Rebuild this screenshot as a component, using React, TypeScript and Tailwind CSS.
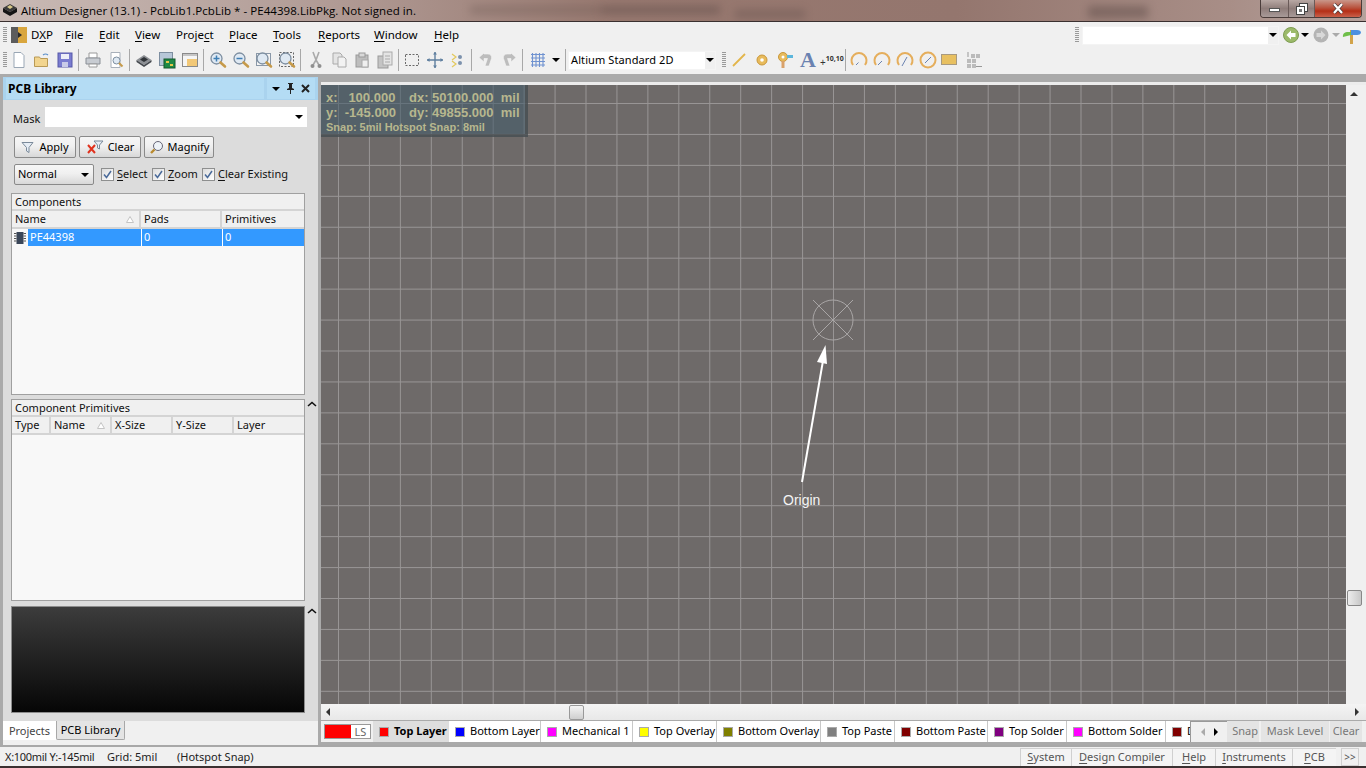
import type { ReactNode } from "react";

const UI = "font-['Noto_Sans',sans-serif]";

function Ic({ children, w = 23 }: { children: ReactNode; w?: number }) {
  return (
    <span className="flex h-full shrink-0 items-center justify-center" style={{ width: w }}>
      <svg width="18" height="18" viewBox="0 0 18 18" fill="none">
        {children}
      </svg>
    </span>
  );
}

function Sep() {
  return <span className="mx-[2px] h-[22px] w-px shrink-0 bg-[#a8a8a8]" />;
}

function Grip() {
  return <span className="block h-[16px] w-[4px] shrink-0 bg-[repeating-linear-gradient(to_bottom,#9a9a9a_0,#9a9a9a_1px,transparent_1px,transparent_2px)]" />;
}

function Caret({ className = "" }: { className?: string }) {
  return <span className={`inline-block h-0 w-0 border-x-[4px] border-t-[4px] border-x-transparent border-t-black ${className}`} />;
}

function Mag({ inner, lens = "#dfe9f3" }: { inner?: ReactNode; lens?: string }) {
  return (
    <>
      <circle cx="7.5" cy="7.5" r="5.5" fill={lens} stroke="#7d8ea0" strokeWidth="1.3" />
      <path d="M11.5 11.5l4.5 4" stroke="#c69a4a" strokeWidth="2.6" strokeLinecap="round" />
      {inner}
    </>
  );
}

function MenuItem({ w, pre = "", u, post = "" }: { w: number; pre?: string; u: string; post?: string }) {
  return (
    <span className="shrink-0 whitespace-nowrap" style={{ width: w }}>
      {pre}
      <span className="underline underline-offset-2">{u}</span>
      {post}
    </span>
  );
}

function TitleBar() {
  return (
    <div className="relative flex h-[21px] items-start overflow-hidden bg-[linear-gradient(90deg,#c9bab5_0%,#b09a94_25%,#97786f_45%,#94766e_70%,#a88e87_90%,#b5a29c_100%)]">
      <span className="absolute left-[470px] top-[6px] h-[8px] w-[130px] bg-[#6e5a54] opacity-40 blur-[4px]" />
      <span className="absolute left-[600px] top-[6px] h-[8px] w-[120px] bg-[#5e4c48] opacity-50 blur-[4px]" />
      <span className="absolute left-[735px] top-[10px] h-[8px] w-[70px] bg-[#5e4c48] opacity-40 blur-[4px]" />
      <span className="absolute left-[1088px] top-[6px] h-[12px] w-[60px] bg-[#5e4c48] opacity-50 blur-[4px]" />
      <span className="ml-[2px] mt-[2px] flex h-[16px] w-[16px] shrink-0 items-center justify-center">
        <svg width="16" height="16" viewBox="0 0 16 16">
          <path d="M1 6l7-4 7 4-7 4z" fill="#3a3a3a" />
          <path d="M1 6v4l7 4 7-4V6l-7 4z" fill="#151515" />
          <path d="M5 5l3-2 3 2-3 2z" fill="#d8c98a" />
        </svg>
      </span>
      <span className="ml-[3px] mt-[2px] whitespace-nowrap font-['Open_Sans',sans-serif] text-[11.5px] leading-[17px] tracking-[0.05px] text-black">
        Altium Designer (13.1) - PcbLib1.PcbLib * - PE44398.LibPkg. Not signed in.
      </span>
      <div className="ml-auto mr-[4px] flex h-[18px] overflow-hidden rounded-b-[4px] border border-t-0 border-[#4a3c3a]">
        <span className="flex w-[28px] items-center justify-center border-r border-[#6a5a58] bg-[linear-gradient(#b8a8a4,#8f7d7a_50%,#a89a98)]">
          <span className="mt-[3px] h-[4px] w-[11px] border border-[#555] bg-white" />
        </span>
        <span className="flex w-[26px] items-center justify-center border-r border-[#6a5a58] bg-[linear-gradient(#b8a8a4,#8f7d7a_50%,#a89a98)]">
          <svg width="12" height="12" viewBox="0 0 12 12">
            <rect x="3.5" y="0.5" width="8" height="8" fill="#fff" stroke="#444" />
            <rect x="0.5" y="3.5" width="8" height="8" fill="#fff" stroke="#444" />
            <rect x="3" y="6" width="3" height="3" fill="#777" />
          </svg>
        </span>
        <span className="flex w-[46px] items-center justify-center bg-[linear-gradient(#c9978a,#b9543f_45%,#b52e16_65%,#c9604a)]">
          <svg width="12" height="11" viewBox="0 0 12 11">
            <path d="M2 1l8 9M10 1l-8 9" stroke="#4a3a3a" strokeWidth="3.6" />
            <path d="M2 1l8 9M10 1l-8 9" stroke="#fff" strokeWidth="2.2" />
          </svg>
        </span>
      </div>
    </div>
  );
}

function MenuBar() {
  return (
    <div className={`flex h-[22px] items-center bg-[#f0f0f0] pt-[4px] text-[11.5px] text-black ${UI}`}>
      <span className="ml-[3px] mr-[4px]">
        <Grip />
      </span>
      <svg width="16" height="16" viewBox="0 0 16 16" className="mr-[4px] shrink-0">
        <rect x="0" y="0" width="7" height="16" fill="#5c5c5c" />
        <rect x="7" y="0" width="9" height="16" fill="#d9a63e" />
        <path d="M7 5l4 3-4 3z" fill="#2a2a2a" />
      </svg>
      <MenuItem w={34} pre="D" u="X" post="P" />
      <MenuItem w={34} u="F" post="ile" />
      <MenuItem w={36} u="E" post="dit" />
      <MenuItem w={41} u="V" post="iew" />
      <MenuItem w={53} pre="Proje" u="c" post="t" />
      <MenuItem w={44} u="P" post="lace" />
      <MenuItem w={45} u="T" post="ools" />
      <MenuItem w={56} u="R" post="eports" />
      <MenuItem w={60} u="W" post="indow" />
      <MenuItem w={40} u="H" post="elp" />
    </div>
  );
}

function ToolBar() {
  return (
    <div className="flex h-[30px] items-center bg-[#f0f0f0] pt-[2px]">
      <span className="ml-[3px]">
        <Grip />
      </span>
      <Ic>
        <path d="M4 1.5h7l3 3v12H4z" fill="#fff" stroke="#9aa7b5" />
      </Ic>
      <Ic>
        <path d="M1.5 6h5l1 1.5h7v8h-13z" fill="#f2d58f" stroke="#b99a56" />
        <path d="M10 4a4 4 0 0 1 5 0" stroke="#5b8fc9" strokeWidth="1.2" />
      </Ic>
      <Ic>
        <rect x="2" y="2" width="14" height="14" fill="#7a7cd0" stroke="#5658a8" />
        <rect x="5" y="3" width="8" height="5" fill="#eceef8" />
        <rect x="6" y="11" width="6" height="5" fill="#c9cbe8" />
      </Ic>
      <Sep />
      <Ic>
        <path d="M5 2h8v5H5z" fill="#fff" stroke="#9a9a9a" />
        <path d="M2 7h14v6H2z" fill="#c8ccd2" stroke="#8a8f96" />
        <path d="M5 13h8v3H5z" fill="#fff" stroke="#9a9a9a" />
      </Ic>
      <Ic>
        <path d="M4 1.5h9v15H4z" fill="#fff" stroke="#a8b0ba" />
        <circle cx="9.5" cy="9.5" r="3.5" fill="#dfe9f3" stroke="#7d8ea0" />
        <path d="M12 12l3.5 3.5" stroke="#c69a4a" strokeWidth="2" />
      </Ic>
      <Sep />
      <Ic>
        <path d="M1.5 9l7.5-5 7.5 5-7.5 5z" fill="#8c8f94" />
        <path d="M1.5 9v2l7.5 5 7.5-5V9l-7.5 5z" fill="#44484e" />
        <path d="M5 8.5l4-2.6 4 2.6-4 2.6z" fill="#2f3338" />
      </Ic>
      <Ic>
        <rect x="1.5" y="1.5" width="13" height="13" fill="#b7c7d8" stroke="#7d8ea0" />
        <rect x="6" y="8" width="11" height="9" fill="#1f8a46" stroke="#14592c" />
        <rect x="8" y="10" width="3" height="2" fill="#e8c64a" />
        <rect x="12" y="13" width="3" height="2" fill="#e8c64a" />
      </Ic>
      <Ic>
        <rect x="1.5" y="2.5" width="15" height="13" fill="#f5f5f5" stroke="#8a8a8a" />
        <rect x="2" y="3" width="14" height="2" fill="#c5c5c5" />
        <rect x="6" y="8" width="10" height="7" fill="#f2c877" />
      </Ic>
      <Sep />
      <Ic>
        <Mag inner={<path d="M4.5 7.5h6M7.5 4.5v6" stroke="#3f7fb5" strokeWidth="1.5" />} />
      </Ic>
      <Ic>
        <Mag inner={<path d="M4.5 7.5h6" stroke="#3f7fb5" strokeWidth="1.5" />} />
      </Ic>
      <Ic>
        <rect x="1.5" y="2.5" width="14" height="12" fill="#f4f4f4" stroke="#8a98a8" />
        <Mag />
      </Ic>
      <Ic>
        <rect x="1.5" y="1.5" width="14" height="14" stroke="#666" strokeDasharray="2 1.5" />
        <Mag />
      </Ic>
      <Sep />
      <span className="w-[1px]" />
      <Ic>
        <path d="M6 1l3 8 3-8M9 9l-3 5M9 9l3 5" stroke="#a9a9a9" strokeWidth="1.6" />
        <circle cx="5.5" cy="15" r="2" fill="#8f8f8f" />
        <circle cx="12.5" cy="15" r="2" fill="#8f8f8f" />
      </Ic>
      <Ic>
        <path d="M3 2h7l2 2v9H3z" fill="#e4e4e4" stroke="#aaa" />
        <path d="M8 6h6l2 2v8H8z" fill="#f2f2f2" stroke="#aaa" />
      </Ic>
      <Ic>
        <rect x="3" y="4" width="12" height="12" fill="#bdbdbd" stroke="#999" />
        <rect x="6" y="2" width="6" height="4" fill="#d8d8d8" stroke="#999" />
        <rect x="9" y="9" width="6" height="7" fill="#efefef" stroke="#aaa" />
      </Ic>
      <Ic>
        <rect x="2" y="5" width="10" height="12" fill="#c4c4c4" stroke="#999" />
        <rect x="7" y="1" width="9" height="13" fill="#e4e4e4" stroke="#aaa" />
        <path d="M9 5h5M9 8h5M9 11h5" stroke="#aaa" />
      </Ic>
      <span className="ml-[2px] mr-[1px] h-[22px] w-px shrink-0 bg-[#a8a8a8]" />
      <Ic>
        <rect x="2.5" y="3.5" width="13" height="11" stroke="#6a6a6a" strokeDasharray="2 1.5" />
      </Ic>
      <Ic>
        <path d="M9 1v16M1 9h16" stroke="#5f7f9f" strokeWidth="1.4" />
        <path d="M9 1l-2 2.5h4zM9 17l-2-2.5h4zM1 9l2.5-2v4zM17 9l-2.5-2v4z" fill="#5f7f9f" />
      </Ic>
      <Ic>
        <path d="M3 3l4 3-4 3" stroke="#e3c95c" strokeWidth="1.2" />
        <path d="M3 10l4 3-4 3" stroke="#e3c95c" strokeWidth="1.2" />
        <circle cx="11" cy="6" r="2" fill="#7d92ad" />
        <circle cx="11" cy="12" r="2" fill="#7d92ad" />
      </Ic>
      <Sep />
      <Ic>
        <path d="M7 3h4a3.5 3.5 0 0 1 3.5 4.5L12 15H8l2.5-7.5H7V11L2 6.5 7 2z" fill="#bdbdbd" stroke="#f5f5f5" strokeWidth="0.6" />
      </Ic>
      <Ic>
        <path d="M11 3H7a3.5 3.5 0 0 0-3.5 4.5L6 15h4L7.5 7.5H11V11l5-4.5L11 2z" fill="#bdbdbd" stroke="#f5f5f5" strokeWidth="0.6" />
      </Ic>
      <Sep />
      <span className="w-[1px]" />
      <Ic>
        <path d="M2 3.5h14M2 7h14M2 10.5h14M2 14h14M3.5 2v14M7 2v14M10.5 2v14M14 2v14" stroke="#6f92d0" strokeWidth="1.1" />
      </Ic>
      <span className="ml-[-1px] flex w-[15px] justify-center">
        <Caret />
      </span>
      <Sep />
      <div className={`flex h-[19px] w-[148px] shrink-0 items-center justify-between border border-[#f4f4f4] bg-white pl-[2px] text-[11px] tracking-[0.1px] text-black ${UI}`}>
        <span>Altium Standard 2D</span>
        <span className="flex h-full w-[10px] items-center justify-center bg-[#f0f0f0]">
          <Caret />
        </span>
      </div>
      <span className="ml-[6px] mr-[1px]">
        <Grip />
      </span>
      <Ic>
        <path d="M3 15L15 3" stroke="#e3b54a" strokeWidth="1.8" />
      </Ic>
      <Ic>
        <circle cx="9" cy="9" r="5" fill="#e8bb5c" stroke="#c9973a" />
        <circle cx="9" cy="9" r="1.8" fill="#fff" />
      </Ic>
      <Ic>
        <circle cx="7" cy="6" r="4.5" fill="#e8bb5c" stroke="#c9973a" />
        <circle cx="7" cy="6" r="1.5" fill="#fff" />
        <rect x="5.5" y="10" width="3" height="7" fill="#d9a26a" />
        <rect x="11" y="4" width="6" height="3" fill="#5cb6dc" />
      </Ic>
      <span className="flex w-[24px] shrink-0 items-center justify-center font-['Liberation_Serif',serif] text-[22px] font-bold leading-none text-[#6a82b0]">A</span>
      <span className={`flex w-[24px] shrink-0 items-center whitespace-nowrap text-[7px] font-bold leading-none text-[#333] ${UI}`}>
        <span className="mt-[4px] text-[10px] font-normal">+</span>
        <span className="-translate-y-[2px]">10,10</span>
      </span>
      <span className="ml-[1px] mr-[1px] h-[22px] w-px shrink-0 bg-[#a8a8a8]" />
      <Ic>
        <path d="M3 14a7.5 7.5 0 1 1 12 0" stroke="#e5ae5c" strokeWidth="2" />
        <path d="M6 14l2.5-2.5" stroke="#6a82b0" />
      </Ic>
      <Ic>
        <path d="M3 14a7.5 7.5 0 1 1 12 0" stroke="#e5ae5c" strokeWidth="2" />
        <path d="M5 14l4-4" stroke="#6a82b0" />
      </Ic>
      <Ic>
        <path d="M3 14a7.5 7.5 0 1 1 12 0" stroke="#e5ae5c" strokeWidth="2" />
        <path d="M6 15l5-9" stroke="#6a82b0" />
      </Ic>
      <Ic>
        <circle cx="9" cy="9" r="7.5" stroke="#e5ae5c" strokeWidth="2" />
        <path d="M6 12l6-6" stroke="#6a82b0" />
      </Ic>
      <Ic w={20}>
        <rect x="1.5" y="3.5" width="15" height="10" fill="#e8c060" stroke="#a89a80" />
      </Ic>
      <Ic w={29}>
        <path d="M3 1v5M11 15.5h6" stroke="#999" />
        <rect x="6" y="3" width="4" height="4" fill="#bbb" />
        <rect x="11" y="3" width="4" height="4" fill="#bbb" />
        <rect x="2" y="8" width="4" height="4" fill="#bbb" />
        <rect x="7" y="8" width="4" height="4" fill="#bbb" />
        <rect x="2" y="13" width="4" height="4" fill="#bbb" />
        <rect x="7" y="13" width="4" height="4" fill="#bbb" />
      </Ic>
    </div>
  );
}

function Nav() {
  return (
    <div className="ml-auto flex items-center pr-[5px]">
      <Grip />
      <div className="ml-[3px] flex h-[19px] w-[197px] items-center justify-end border border-[#f4f4f4] bg-white">
        <span className="flex h-full w-[10px] items-center justify-center bg-[#f0f0f0]">
          <Caret />
        </span>
      </div>
      <svg width="16" height="16" viewBox="0 0 16 16" className="ml-[4px]">
        <circle cx="8" cy="8" r="7.5" fill="#9cba6a" stroke="#7e9c52" />
        <path d="M8 3.5L3.5 8 8 12.5V10h4.5V6H8z" fill="#fff" />
      </svg>
      <Caret className="ml-[2px]" />
      <svg width="16" height="16" viewBox="0 0 16 16" className="ml-[4px]">
        <circle cx="8" cy="8" r="7.5" fill="#b4b4b4" />
        <path d="M8 3.5L12.5 8 8 12.5V10H3.5V6H8z" fill="#d8d8d8" />
      </svg>
      <span className="ml-[3px] inline-block h-0 w-0 border-x-[4px] border-t-[4px] border-x-transparent border-t-[#aaa]" />
      <svg width="19" height="17" viewBox="0 0 19 17" className="ml-[2px]">
        <rect x="8" y="3" width="3" height="14" fill="#d2a34a" />
        <path d="M9 3h6a4 3 0 0 1 4 3 4 3 0 0 1-4 2H9z" fill="#4c8fe0" />
        <path d="M9 5H5a4 4 0 0 0-4 5l8-2z" fill="#6fbf4a" />
      </svg>
    </div>
  );
}

function Btn({ w, icon, label }: { w: number; icon: ReactNode; label: string }) {
  return (
    <span
      className="flex h-[22px] items-center justify-center gap-[4px] rounded-[2px] border border-[#8a8a8a] bg-[linear-gradient(#f6f6f6,#f0f0f0_45%,#d8d8d8)] text-[11px] text-black"
      style={{ width: w }}
    >
      {icon}
      {label}
    </span>
  );
}

function Check({ u, rest, w }: { u: string; rest: string; w: number }) {
  return (
    <span className="flex items-center gap-[3px] whitespace-nowrap" style={{ width: w }}>
      <span className="flex h-[13px] w-[13px] shrink-0 items-center justify-center border border-[#8e8f8f] bg-[linear-gradient(135deg,#dcdcdc,#ffffff)]">
        <svg width="9" height="9" viewBox="0 0 9 9">
          <path d="M1 4.5l2.5 3L8 1" stroke="#4a6a9a" strokeWidth="1.5" fill="none" />
        </svg>
      </span>
      <span>
        <span className="underline underline-offset-2">{u}</span>
        {rest}
      </span>
    </span>
  );
}

function Th({ w, label, sort }: { w: number; label: string; sort?: boolean }) {
  return (
    <span className="flex h-full shrink-0 items-center justify-between border-r-2 border-[#d4d4d4] pl-[3px] pr-[5px] pt-[1px] last:border-r-0" style={{ width: w }}>
      {label}
      {sort && (
        <svg width="8" height="7" viewBox="0 0 8 7">
          <path d="M4 .5L7.5 6.5H.5z" fill="#fff" stroke="#c4c4c4" />
        </svg>
      )}
    </span>
  );
}

function UpArrow() {
  return (
    <svg width="10" height="6" viewBox="0 0 10 6" className="ml-[1px]">
      <path d="M1 5l4-3.5L9 5" stroke="#111" strokeWidth="1.6" fill="none" />
    </svg>
  );
}

function Panel() {
  return (
    <div className={`flex w-[318px] shrink-0 flex-col border-l-[3px] border-[#aaaaaa] text-[11px] text-[#111] ${UI}`}>
      <div className="flex-1 bg-[#dcdcdc]">
        <div className="flex h-[23px] items-stretch gap-[3px] bg-[#aad3ee] p-[1px] px-[3px] pt-[1px]">
          <span className="flex flex-1 items-center bg-[#b4dcf4] pl-[2px] text-[12px] font-bold text-black">PCB Library</span>
          <span className="flex w-[48px] items-center justify-around bg-[#b4dcf4] px-[2px]">
            <Caret />
            <svg width="9" height="11" viewBox="0 0 9 11">
              <path d="M2 0h5v1H6v4l2 1v1H5v4H4V7H1V6l2-1V1H2z" fill="#222" />
            </svg>
            <svg width="9" height="9" viewBox="0 0 9 9">
              <path d="M1 1l7 7M8 1L1 8" stroke="#222" strokeWidth="2" />
            </svg>
          </span>
        </div>
        <div className="mt-[6px] flex h-[21px] items-center pl-[10px]">
          <span className="w-[32px] pt-[5px]">Mask</span>
          <span className="flex h-[20px] w-[262px] items-center justify-end bg-white pr-[4px]">
            <Caret />
          </span>
        </div>
        <div className="mt-[9px] flex gap-[3px] pl-[11px]">
          <Btn
            w={62}
            label="Apply"
            icon={
              <svg width="14" height="13" viewBox="0 0 14 13">
                <path d="M1 1.5h11L8 6.5v5L5.5 10V6.5z" fill="#e6edf5" stroke="#7b8a9a" />
              </svg>
            }
          />
          <Btn
            w={62}
            label="Clear"
            icon={
              <svg width="18" height="14" viewBox="0 0 18 14">
                <path d="M8 1h9l-3.5 4v4L11.5 8V5z" fill="#e6edf5" stroke="#7b8a9a" />
                <path d="M2 5l7 8M9 5l-7 8" stroke="#e0321e" strokeWidth="2" />
              </svg>
            }
          />
          <Btn
            w={70}
            label="Magnify"
            icon={
              <svg width="15" height="15" viewBox="0 0 15 15">
                <circle cx="9" cy="6" r="4.5" fill="#eef3f8" stroke="#667" />
                <path d="M5.5 9.5L2 13" stroke="#b98a2e" strokeWidth="2.4" />
              </svg>
            }
          />
        </div>
        <div className="mt-[6px] flex items-center pl-[11px]">
          <span className="flex h-[21px] w-[80px] items-center justify-between rounded-[2px] border border-[#8a8a8a] bg-[linear-gradient(#f6f6f6,#f0f0f0_45%,#d8d8d8)] pl-[3px] pr-[4px] text-black">
            Normal
            <Caret />
          </span>
          <span className="ml-[7px] flex">
            <Check u="S" rest="elect" w={51} />
            <Check u="Z" rest="oom" w={50} />
            <Check u="C" rest="lear Existing" w={90} />
          </span>
        </div>
        <div className="ml-[8px] mt-[8px] flex h-[202px] w-[294px] flex-col border border-[#a0a0a0] bg-[#f8f8f8]">
          <div className="flex h-[17px] items-center border-b-2 border-[#d4d4d4] bg-[#f0f0f0] pl-[3px] pt-[1px]">Components</div>
          <div className="flex h-[18px] items-center border-b-2 border-[#d4d4d4] bg-[#f0f0f0]">
            <Th w={129} label="Name" sort />
            <Th w={81} label="Pads" />
            <Th w={82} label="Primitives" />
          </div>
          <div className="flex h-[17px] items-center">
            <span className="flex h-full w-[16px] shrink-0 items-center justify-center">
              <svg width="12" height="14" viewBox="0 0 12 14">
                <rect x="2.5" y="1" width="7" height="12" fill="#3a4658" />
                <path d="M0 2.5h2.5M0 5h2.5M0 7.5h2.5M0 10h2.5M9.5 2.5H12M9.5 5H12M9.5 7.5H12M9.5 10H12" stroke="#555" />
              </svg>
            </span>
            <span className="flex h-full w-[113px] items-center bg-[#3399ff] pl-[2px] text-white">PE44398</span>
            <span className="flex h-full w-[81px] items-center border-l border-white bg-[#3399ff] pl-[2px] text-white">0</span>
            <span className="flex h-full w-[82px] items-center border-l border-white bg-[#3399ff] pl-[2px] text-white">0</span>
          </div>
        </div>
        <div className="mt-[4px] flex items-start">
          <div className="ml-[8px] flex h-[202px] w-[294px] shrink-0 flex-col border border-[#a0a0a0] bg-[#f8f8f8]">
            <div className="flex h-[17px] items-center border-b-2 border-[#d4d4d4] bg-[#f0f0f0] pl-[3px] pt-[1px]">Component Primitives</div>
            <div className="flex h-[18px] items-center border-b-2 border-[#d4d4d4] bg-[#f0f0f0]">
              <Th w={39} label="Type" />
              <Th w={61} label="Name" sort />
              <Th w={61} label="X-Size" />
              <Th w={61} label="Y-Size" />
              <Th w={70} label="Layer" />
            </div>
          </div>
          <span className="ml-[1px] mt-[2px]">
            <UpArrow />
          </span>
        </div>
        <div className="mt-[5px] flex items-start">
          <div className="ml-[8px] h-[107px] w-[294px] shrink-0 border border-[#8c8c8c] bg-[linear-gradient(#3c3c3c,#060606)]" />
          <span className="ml-[1px] mt-[2px]">
            <UpArrow />
          </span>
        </div>
      </div>
      <div className="flex h-[24px] items-start bg-[#f0f0f0] text-[11px]">
        <span className="flex h-[19px] w-[53px] items-center justify-center bg-white pt-[1px] text-[#444]">Projects</span>
        <span className="flex h-[19px] w-[69px] items-center justify-center rounded-b-[2px] border-x border-b border-[#a8a8a8] bg-[#e4e4e4] pt-[1px] text-black">PCB Library</span>
      </div>
    </div>
  );
}

function Canvas() {
  return (
    <div className="relative flex-1 overflow-hidden bg-[#6e6a69] bg-[linear-gradient(to_right,#989595_1px,transparent_1px),linear-gradient(to_bottom,#989595_1px,transparent_1px)] bg-[size:30.95px_30.95px] bg-[position:17px_18px]">
      <div className="absolute left-0 top-0 h-[52px] w-[207px] border-b-[3px] border-r-[3px] border-[#4a4a4a]/60 bg-[#3f5a6a]/55 px-[5px] pt-[5px] font-['Liberation_Sans',sans-serif] font-bold text-[#b7b78e]">
        <div className="flex h-[15px] whitespace-pre text-[13px] leading-[15px]">
          <span className="w-[83px]">{"x:   100.000"}</span>
          <span>{"dx: 50100.000  mil"}</span>
        </div>
        <div className="flex h-[15px] whitespace-pre text-[13px] leading-[15px]">
          <span className="w-[83px]">{"y:  -145.000"}</span>
          <span>{"dy: 49855.000  mil"}</span>
        </div>
        <div className="whitespace-pre text-[11px] leading-[14px]">Snap: 5mil Hotspot Snap: 8mil</div>
      </div>
      <svg className="absolute left-[470px] top-[200px]" width="80" height="210" viewBox="0 0 80 210" fill="none">
        <circle cx="42" cy="35" r="20" stroke="#a9a6a6" />
        <path d="M22 15l40 40M62 15l-40 40" stroke="#a9a6a6" />
        <path d="M11 197L33 70" stroke="#fff" strokeWidth="2" />
        <path d="M34.5 60L26 77l10 2z" fill="#fff" />
      </svg>
      <span className="absolute left-[462px] top-[407px] font-['Liberation_Sans',sans-serif] text-[14px] leading-[16px] text-[#f4f4f4]">Origin</span>
    </div>
  );
}

function VScroll() {
  return (
    <div className="flex w-[20px] shrink-0 flex-col bg-[#f0f0f0] pr-[4px]">
      <span className="flex h-[18px] items-center justify-center">
        <span className="h-0 w-0 border-x-[4px] border-b-[4px] border-x-transparent border-b-[#333]" />
      </span>
      <span className="mt-[487px] h-[16px] w-[15px] self-end rounded-[2px] border border-[#888] bg-[linear-gradient(90deg,#ececec,#c8c8c8)]" />
    </div>
  );
}

function HScroll() {
  return (
    <div className="flex h-[16px] items-center bg-[linear-gradient(#f4f4f4,#e8e8e8)]">
      <span className="ml-[5px] h-0 w-0 border-y-[4px] border-r-[4px] border-y-transparent border-r-[#333]" />
      <span className="ml-[239px] h-[15px] w-[15px] rounded-[2px] border border-[#999] bg-[linear-gradient(#f4f4f4,#cfcfcf)]" />
      <span className="ml-auto mr-[7px] h-0 w-0 border-y-[4px] border-l-[4px] border-y-transparent border-l-[#333]" />
    </div>
  );
}

const LAYERS = [
  { name: "Bottom Layer", color: "#0000ff", w: 92 },
  { name: "Mechanical 1", color: "#ff00ff", w: 92 },
  { name: "Top Overlay", color: "#ffff00", w: 84 },
  { name: "Bottom Overlay", color: "#808000", w: 104 },
  { name: "Top Paste", color: "#808080", w: 74 },
  { name: "Bottom Paste", color: "#800000", w: 93 },
  { name: "Top Solder", color: "#800080", w: 79 },
  { name: "Bottom Solder", color: "#ff00ff", w: 99 },
];

function LayerTabs() {
  return (
    <div className={`flex h-[21px] items-stretch overflow-hidden bg-[#f0f0f0] pr-[4px] text-[11px] text-black ${UI}`}>
      <div className="ml-[3px] mt-[3px] flex h-[15px] w-[47px] shrink-0 border border-[#999] bg-white">
        <span className="w-[26px] bg-[#ff0000]" />
        <span className="flex-1 text-center leading-[13px] text-[#666]">LS</span>
      </div>
      <div className="ml-[2px] flex w-[76px] shrink-0 items-center gap-[5px] bg-[#dedede] pl-[6px] font-bold">
        <span className="h-[10px] w-[10px] shrink-0 border border-[#aaa] bg-[#ff0000]" />
        Top Layer
      </div>
      {LAYERS.map((l) => (
        <div key={l.name} className="flex shrink-0 items-center gap-[5px] whitespace-nowrap border-r border-[#c8c8c8] bg-white pl-[6px]" style={{ width: l.w }}>
          <span className="h-[10px] w-[10px] shrink-0 border border-[#aaa]" style={{ backgroundColor: l.color }} />
          {l.name}
        </div>
      ))}
      <div className="flex w-[24px] shrink-0 items-center gap-[5px] overflow-hidden bg-white pl-[6px]">
        <span className="h-[10px] w-[10px] shrink-0 border border-[#aaa] bg-[#800000]" />D
      </div>
      <div className="flex w-[37px] shrink-0 items-center justify-around border-l border-t border-[#999] bg-[#f0f0f0] px-[5px]">
        <span className="h-0 w-0 border-y-[4px] border-r-[4px] border-y-transparent border-r-[#aaa]" />
        <span className="h-0 w-0 border-y-[4px] border-l-[4px] border-y-transparent border-l-black" />
      </div>
      <div className="flex w-[32px] shrink-0 items-center justify-end bg-[#e4e4e4] pr-[1px] text-[#777]">Snap</div>
      <div className="ml-[2px] flex w-[68px] shrink-0 items-center justify-center bg-[#e4e4e4] text-[#777]">Mask Level</div>
      <div className="ml-[1px] flex w-[32px] shrink-0 items-center justify-center bg-[#e4e4e4] text-[#777]">Clear</div>
    </div>
  );
}

function StatusTab({ w, u, rest }: { w: number; u: string; rest: string }) {
  return (
    <span className="flex h-full shrink-0 items-center justify-center border-l border-t border-[#d0d0d0] bg-[#f4f4f4]" style={{ width: w }}>
      <span>
        <span className="underline underline-offset-2">{u}</span>
        {rest}
      </span>
    </span>
  );
}

function StatusBar() {
  return (
    <div className={`flex h-[21px] items-stretch border-t-2 border-[#a8a8a8] bg-[#f0f0f0] pt-[1px] text-[11px] text-[#222] ${UI}`}>
      <span className="ml-[5px] flex w-[102px] items-center tracking-[-0.3px]">X:100mil Y:-145mil</span>
      <span className="flex w-[70px] items-center">Grid: 5mil</span>
      <span className="flex items-center">(Hotspot Snap)</span>
      <div className="ml-auto flex pr-[7px] text-[#555]">
        <StatusTab w={51} u="S" rest="ystem" />
        <StatusTab w={101} u="D" rest="esign Compiler" />
        <StatusTab w={43} u="H" rest="elp" />
        <StatusTab w={77} u="I" rest="nstruments" />
        <StatusTab w={44} u="P" rest="CB" />
        <span className="ml-[5px] flex w-[18px] shrink-0 items-center justify-center border border-[#d0d0d0] text-[10px] text-[#555]">&gt;&gt;</span>
      </div>
    </div>
  );
}

export default function App() {
  return (
    <div className="flex h-[768px] w-[1366px] flex-col overflow-hidden bg-[#f0f0f0]">
      <TitleBar />
      <div className="h-px bg-[#3a3030]" />
      <div className="relative">
        <MenuBar />
        <ToolBar />
        <div className="absolute right-0 top-[3px] flex h-[20px] w-[291px]">
          <Nav />
        </div>
      </div>
      <div className="h-[3px] bg-[#aaaaaa]" />
      <div className="flex flex-1 items-stretch">
        <Panel />
        <div className="flex w-[3px] shrink-0 bg-[#aaaaaa]" />
        <div className="flex flex-1 flex-col bg-[#aaaaaa]">
          <div className="h-[5px]" />
          <div className="h-[3px] bg-[#ececec]" />
          <div className="flex flex-1 overflow-hidden">
            <Canvas />
            <VScroll />
          </div>
          <HScroll />
          <div className="h-px bg-[#aaa]" />
          <LayerTabs />
          <div className="h-[3px] bg-[#aaa]" />
        </div>
      </div>
      <StatusBar />
      <div className="h-[2px] bg-[#3a3030]" />
    </div>
  );
}
